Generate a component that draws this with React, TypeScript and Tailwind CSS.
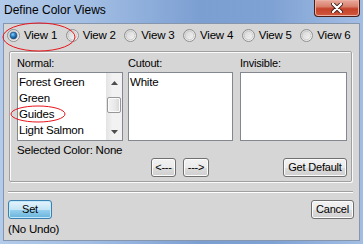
import React from "react";

const font = { fontFamily: '"Liberation Sans", Arial, sans-serif' };

function Radio({ checked }: { checked?: boolean }) {
  return (
    <svg width="13" height="13" viewBox="0 0 13 13" className="shrink-0">
      <defs>
        <linearGradient id="rb" x1="0" y1="0" x2="1" y2="1">
          <stop offset="0" stopColor="#d0d0d0" />
          <stop offset="1" stopColor="#fbfbfb" />
        </linearGradient>
        <radialGradient id="dot" cx="0.4" cy="0.35" r="0.7">
          <stop offset="0" stopColor="#7fd4ff" />
          <stop offset="0.5" stopColor="#2a7bc0" />
          <stop offset="1" stopColor="#0d3a6a" />
        </radialGradient>
      </defs>
      <circle cx="6.5" cy="6.5" r="6" fill="url(#rb)" stroke="#8e8f8f" strokeWidth="1" />
      <circle cx="6.5" cy="6.5" r="4.2" fill="none" stroke="#c8c8c8" strokeWidth="0.8" />
      {checked && <circle cx="6.5" cy="6.5" r="3.4" fill="url(#dot)" stroke="#1c4d80" strokeWidth="0.6" />}
    </svg>
  );
}

function Btn({ children, className = "", def = false }: { children: React.ReactNode; className?: string; def?: boolean }) {
  return (
    <div
      className={
        "flex items-center justify-center rounded-[3px] border text-[11px] leading-none text-black " +
        (def
          ? "border-[#3c7fb1] bg-[linear-gradient(#e5f4fc_0%,#c4e5f6_50%,#98d1ef_51%,#68b3db_100%)] shadow-[inset_0_0_0_1px_#c2e8fb] "
          : "border-[#707070] bg-[linear-gradient(#f2f2f2_0%,#ebebeb_50%,#dddddd_51%,#cfcfcf_100%)] shadow-[inset_0_0_0_1px_#fcfcfc] ") +
        className
      }
    >
      {children}
    </div>
  );
}

export default function App() {
  const views = ["View 1", "View 2", "View 3", "View 4", "View 5", "View 6"];
  return (
    <div
      className="relative flex h-[244px] w-[363px] flex-col overflow-hidden bg-[linear-gradient(90deg,#b3cbea_0%,#a1bde3_25%,#7c9fd2_55%,#7fa2d4_75%,#a3bee4_100%)]"
      style={font}
    >
      {/* Title bar */}
      <div className="flex h-[23px] shrink-0 items-start justify-between">
        <div className="mt-[3px] pl-[4px] text-[12px] leading-[14px] text-black">Define Color Views</div>
        <div className="mr-[3px] flex h-[17px] w-[46px] items-center justify-center rounded-b-[4px] border border-t-0 border-[#4a1d16] bg-[linear-gradient(#e9a99b_0%,#d9826f_40%,#c4432a_55%,#d1583d_100%)] shadow-[inset_0_0_0_1px_#eab0a4]">
          <svg width="12" height="10" viewBox="0 0 12 10">
            <path d="M2 1 L10 9 M10 1 L2 9" stroke="#3b1a14" strokeWidth="4" strokeLinecap="round" />
            <path d="M2 1 L10 9 M10 1 L2 9" stroke="#ffffff" strokeWidth="2.4" strokeLinecap="round" />
          </svg>
        </div>
      </div>

      {/* Client area */}
      <div className="mx-[3px] mb-[3px] flex h-[218px] flex-col border border-[#8596ad] bg-[#d6d6d6] text-[11px] leading-[13px] tracking-[-0.2px] text-black">
        {/* radio row */}
        <div className="flex pl-[3px] pt-[5px]">
          {views.map((v, i) => (
            <div key={v} className="flex w-[59px] items-center gap-[4px]">
              <Radio checked={i === 0} />
              <span className="text-[11.5px]">{v}</span>
            </div>
          ))}
        </div>

        {/* group box */}
        <div className="ml-[5px] mt-[9px] flex w-[343px] flex-col rounded-[2px] border border-[#a0a0a0] pl-[7px] pr-[3px] pt-[5px] pb-[4px] shadow-[inset_1px_1px_0_#fafafa,1px_1px_0_#fafafa]">
          <div className="flex h-[13px]">
            <div className="w-[106px]">Normal:</div>
            <div className="ml-[5px] w-[105px]">Cutout:</div>
            <div className="ml-[7px] w-[107px]">Invisible:</div>
          </div>
          <div className="mt-[2px] flex h-[69px]">
            {/* Normal list */}
            <div className="flex w-[106px] border border-[#828790] bg-white">
              <div className="flex flex-1 flex-col pl-[1px] pt-[1px]">
                {["Forest Green", "Green", "Guides", "Light Salmon"].map((t) => (
                  <div key={t} className="h-[16px] text-[11.5px] leading-[16px]">
                    {t}
                  </div>
                ))}
              </div>
              <div className="flex w-[16px] flex-col bg-[linear-gradient(90deg,#e3e3e3,#f2f2f2_40%,#f2f2f2)]">
                <div className="flex h-[17px] items-center justify-center pt-[3px]">
                  <svg width="7" height="4" viewBox="0 0 7 4">
                    <path d="M0 4 L3.5 0 L7 4 Z" fill="#4d4d4d" />
                  </svg>
                </div>
                <div className="flex h-[33px] flex-col">
                  <div className="mx-[1px] mt-[7px] h-[16px] rounded-[2px] border border-[#979797] bg-[linear-gradient(90deg,#f4f4f4,#e8e8e8_60%,#d6d6d6)] shadow-[inset_0_0_0_1px_#fbfbfb]" />
                </div>
                <div className="flex h-[17px] items-center justify-center">
                  <svg width="7" height="4" viewBox="0 0 7 4">
                    <path d="M0 0 L7 0 L3.5 4 Z" fill="#4d4d4d" />
                  </svg>
                </div>
              </div>
            </div>
            {/* Cutout list */}
            <div className="ml-[5px] w-[105px] border border-[#828790] bg-white pl-[1px] pt-[1px]">
              <div className="h-[16px] text-[11.5px] leading-[16px]">White</div>
            </div>
            {/* Invisible list */}
            <div className="ml-[7px] w-[107px] border border-[#828790] bg-white" />
          </div>
          <div className="mt-[3px] h-[13px] text-[11.5px]">Selected Color: None</div>
          <div className="mt-[1px] flex h-[19px] pr-[1px]">
            <Btn className="ml-[134px] w-[25px] text-[10px]">&lt;---</Btn>
            <Btn className="ml-[7px] w-[26px] text-[10px]">---&gt;</Btn>
            <Btn className="ml-auto w-[64px] text-[11.5px]">Get Default</Btn>
          </div>
        </div>

        {/* separator */}
        <div className="ml-[4px] mt-[9px] h-[2px] w-[345px] border-t border-b border-t-[#a0a0a0] border-b-white" />

        {/* bottom buttons */}
        <div className="mt-[7px] flex h-[19px] pl-[4px] pr-[5px]">
          <Btn def className="w-[44px] text-[11.5px]">Set</Btn>
          <Btn className="ml-auto w-[43px] text-[11.5px]">Cancel</Btn>
        </div>
        <div className="ml-[4px] mt-[4px] text-[11.5px]">(No Undo)</div>
      </div>

      {/* red annotation ellipses */}
      <svg className="pointer-events-none absolute left-0 top-0" width="363" height="244">
        <ellipse cx="39" cy="37" rx="36" ry="14" fill="none" stroke="#e8141b" strokeWidth="1" />
        <ellipse cx="38" cy="114" rx="27" ry="8" fill="none" stroke="#e8141b" strokeWidth="1" />
      </svg>
    </div>
  );
}
